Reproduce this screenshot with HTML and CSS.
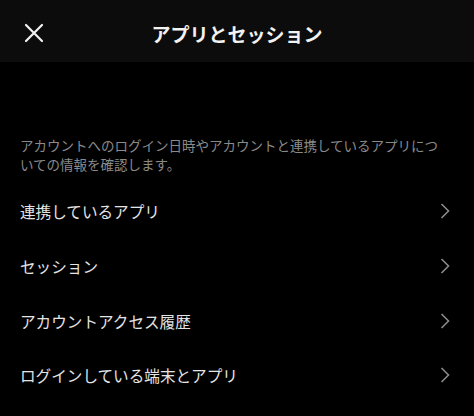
FILE: index.html
```html
<!DOCTYPE html>
<html lang="ja">
<head>
<meta charset="utf-8">
<link rel="stylesheet" href="styles.css">
</head>
<body>
<div class="page">
  <header class="header">
    <button class="close" aria-label="閉じる">
      <svg width="20" height="20" viewBox="0 0 20 20"><path d="M2 2 L18 18 M18 2 L2 18" stroke="#f2f2f2" stroke-width="2.2" stroke-linecap="round" fill="none"/></svg>
    </button>
    <h1 class="title">アプリとセッション</h1>
    <span class="spacer"></span>
  </header>
  <p class="desc">アカウントへのログイン日時やアカウントと連携しているアプリについての情報を確認します。</p>
  <ul class="list">
    <li class="item"><span class="label">連携しているアプリ</span><svg class="chev" width="10" height="16" viewBox="0 0 10 16"><path d="M1.5 1 L8.5 8 L1.5 15" stroke="#8a8a8a" stroke-width="1.6" fill="none"/></svg></li>
    <li class="item"><span class="label">セッション</span><svg class="chev" width="10" height="16" viewBox="0 0 10 16"><path d="M1.5 1 L8.5 8 L1.5 15" stroke="#8a8a8a" stroke-width="1.6" fill="none"/></svg></li>
    <li class="item"><span class="label">アカウントアクセス履歴</span><svg class="chev" width="10" height="16" viewBox="0 0 10 16"><path d="M1.5 1 L8.5 8 L1.5 15" stroke="#8a8a8a" stroke-width="1.6" fill="none"/></svg></li>
    <li class="item"><span class="label">ログインしている端末とアプリ</span><svg class="chev" width="10" height="16" viewBox="0 0 10 16"><path d="M1.5 1 L8.5 8 L1.5 15" stroke="#8a8a8a" stroke-width="1.6" fill="none"/></svg></li>
  </ul>
</div>
</body>
</html>
```
FILE: styles.css
```css
html, body {
  margin: 0;
  padding: 0;
  background: #000;
  font-family: "Noto Sans CJK JP", "Noto Sans", sans-serif;
}
.page {
  width: 474px;
  height: 416px;
  overflow: hidden;
}
.header {
  height: 62px;
  background: #0c0c0c;
  display: grid;
  grid-template-columns: 1fr auto 1fr;
  align-items: center;
  padding: 4px 24px 0;
  box-sizing: border-box;
}
.close {
  width: 20px;
  height: 20px;
  padding: 0;
  margin: 0;
  border: 0;
  background: none;
  display: flex;
}
.title {
  margin: 0;
  text-align: center;
  color: #f2f2f2;
  font-size: 19px;
  font-weight: 700;
  line-height: 1;
}
.spacer {
  width: 20px;
}
.desc {
  margin: 0;
  padding: 74px 30px 0 20px;
  color: #8a8a8a;
  font-size: 13.5px;
  line-height: 19px;
}
.list {
  list-style: none;
  margin: 10px 0 0;
  padding: 0;
}
.item {
  height: 54.7px;
  display: flex;
  align-items: center;
  justify-content: space-between;
  padding: 0 24px 0 20px;
  color: #e4e4e4;
  font-size: 15.6px;
}
.chev {
  display: block;
}
```
